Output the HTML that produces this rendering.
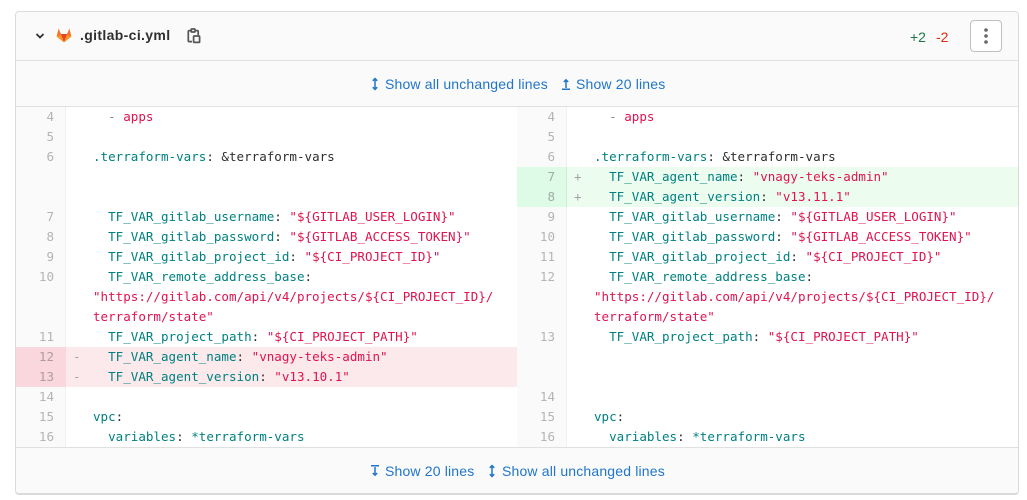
<!DOCTYPE html>
<html><head><meta charset="utf-8"><style>
html,body{margin:0;padding:0;background:#fff;width:1027px;height:500px;overflow:hidden}
body{position:relative;font-family:"Liberation Sans",sans-serif}
.a{position:absolute}
#card{left:15px;top:11px;width:1002px;height:481px;border:1px solid #dbdbdb;border-bottom:2px solid #dbdbdb;border-radius:4px;background:#fafafa}
.bar{position:absolute;left:16px;width:1002px;background:#fafafa;box-sizing:border-box}
.l{position:absolute;top:0;font-size:14px;line-height:20px;color:#1f75cb;white-space:nowrap;letter-spacing:.17px}
.col{position:absolute;top:107px;height:340px;background:#fff;font:12.55px/20px "DejaVu Sans Mono",monospace;overflow:hidden}
.r{height:20px;position:relative;background:#fff}
.n{position:absolute;left:0;top:0;width:50px;height:20px;box-sizing:border-box;background:#fafafa;border-right:1px solid #f0f0f0;text-align:right;padding-right:11px;color:#b4b4b4}
.c{position:absolute;left:77px;top:0;color:#2e2e2e;white-space:pre}
.m{position:absolute;left:57px;top:0;color:#a3a3a3}
.k{color:#008080}.s{color:#e0134f}.g{color:#8a8a8a}
.del{background:#fbe9eb}.del .n{background:#f9d7dc;border-color:#f9d7dc;color:#b09ca0}
.add{background:#ecfdf0}.add .n{background:#ddfbe6;border-color:#c7f0d2;color:#a0ada4}
</style></head><body>
<div class="a" id="card"></div>

<svg class="a" style="left:35px;top:32px" width="10" height="8" viewBox="0 0 10 8"><path d="M1.500 2l3.500 3.500L8.500 2" fill="none" stroke="#303030" stroke-width="1.800"/></svg>
<svg class="a" style="left:56px;top:27px" width="16" height="16" viewBox="0 0 16 16"><path d="M8 15.200L.6 9.600 2.600 1.600 5 7h6l2.400-5.400 2 8z" fill="#fc6d26"/><path d="M8 15.200L5 7h6z" fill="#e24329"/><path d="M8 15.200L.6 9.600 5 7z" fill="#fca326" opacity=".75"/><path d="M8 15.200l7.400-5.600L11 7z" fill="#fca326" opacity=".75"/></svg>
<div class="a" style="left:80px;top:25px;font-size:14px;line-height:20px;font-weight:700;color:#303030;letter-spacing:.35px">.gitlab-ci.yml</div>
<svg class="a" style="left:187px;top:28px" width="14" height="16" viewBox="0 0 14 16" fill="none" stroke="#555" stroke-width="1.700"><path d="M4 2.600H2.200a.9.9 0 0 0-.9.9v9.200a.9.9 0 0 0 .9.9H5M8.800 2.600h1.500a.9.9 0 0 1 .9.9V7"/><rect x="4.200" y="1" width="3.800" height="3" rx=".6"/><rect x="6.600" y="8" width="6" height="6.400" rx=".8"/></svg>

<div class="a" style="left:910px;top:27px;font-size:14px;line-height:20px;color:#217645">+2</div>
<div class="a" style="left:936px;top:27px;font-size:14px;line-height:20px;color:#dd2b0e">-2</div>
<div class="a" style="left:970px;top:20px;width:32px;height:32px;box-sizing:border-box;border:1px solid #bfbfbf;border-radius:4px;background:#fff"></div>
<svg class="a" style="left:981px;top:27px" width="10" height="18" viewBox="0 0 10 18" fill="#666"><circle cx="5" cy="3" r="1.800"/><circle cx="5" cy="9" r="1.800"/><circle cx="5" cy="15" r="1.800"/></svg>

<div class="bar" style="top:60px;height:47px;border-top:1px solid #e0e0e0;border-bottom:1px solid #e0e0e0"></div>
<svg class="a" style="left:370px;top:77px" width="10" height="14" viewBox="0 0 10 14" fill="none" stroke="#1f75cb" stroke-width="1.500"><path d="M5 2v10M2.800 3.800L5 1.600l2.200 2.200M2.800 10.200L5 12.400l2.200-2.200"/></svg>
<div class="a l" style="left:385px;top:74px">Show all unchanged lines</div>
<svg class="a" style="left:561px;top:77px" width="10" height="14" viewBox="0 0 10 14" fill="none" stroke="#1f75cb" stroke-width="1.500"><path d="M5 3v8M2.800 5L5 2.800 7.200 5M1 12.200h8"/></svg>
<div class="a l" style="left:576px;top:74px">Show 20 lines</div>

<div class="col" style="left:16px;width:501px">
<div class="r"><span class="n">4</span><span class="c"><span class="g">  -</span> <span class="s">apps</span></span></div>
<div class="r"><span class="n">5</span></div>
<div class="r"><span class="n">6</span><span class="c"><span class="k">.terraform-vars</span>: &amp;terraform-vars</span></div>
<div class="r"><span class="n"></span></div>
<div class="r"><span class="n"></span></div>
<div class="r"><span class="n">7</span><span class="c">  <span class="k">TF_VAR_gitlab_username</span>: <span class="s">"${GITLAB_USER_LOGIN}"</span></span></div>
<div class="r"><span class="n">8</span><span class="c">  <span class="k">TF_VAR_gitlab_password</span>: <span class="s">"${GITLAB_ACCESS_TOKEN}"</span></span></div>
<div class="r"><span class="n">9</span><span class="c">  <span class="k">TF_VAR_gitlab_project_id</span>: <span class="s">"${CI_PROJECT_ID}"</span></span></div>
<div class="r"><span class="n">10</span><span class="c">  <span class="k">TF_VAR_remote_address_base</span>:</span></div>
<div class="r"><span class="n"></span><span class="c s">"https://gitlab.com/api/v4/projects/${CI_PROJECT_ID}/</span></div>
<div class="r"><span class="n"></span><span class="c s">terraform/state"</span></div>
<div class="r"><span class="n">11</span><span class="c">  <span class="k">TF_VAR_project_path</span>: <span class="s">"${CI_PROJECT_PATH}"</span></span></div>
<div class="r del"><span class="n">12</span><span class="m">-</span><span class="c">  <span class="k">TF_VAR_agent_name</span>: <span class="s">"vnagy-teks-admin"</span></span></div>
<div class="r del"><span class="n">13</span><span class="m">-</span><span class="c">  <span class="k">TF_VAR_agent_version</span>: <span class="s">"v13.10.1"</span></span></div>
<div class="r"><span class="n">14</span></div>
<div class="r"><span class="n">15</span><span class="c"><span class="k">vpc</span>:</span></div>
<div class="r"><span class="n">16</span><span class="c">  <span class="k">variables</span>: <span class="k">*terraform-vars</span></span></div>
</div>

<div class="col" style="left:517px;width:501px">
<div class="r"><span class="n">4</span><span class="c"><span class="g">  -</span> <span class="s">apps</span></span></div>
<div class="r"><span class="n">5</span></div>
<div class="r"><span class="n">6</span><span class="c"><span class="k">.terraform-vars</span>: &amp;terraform-vars</span></div>
<div class="r add"><span class="n">7</span><span class="m">+</span><span class="c">  <span class="k">TF_VAR_agent_name</span>: <span class="s">"vnagy-teks-admin"</span></span></div>
<div class="r add"><span class="n">8</span><span class="m">+</span><span class="c">  <span class="k">TF_VAR_agent_version</span>: <span class="s">"v13.11.1"</span></span></div>
<div class="r"><span class="n">9</span><span class="c">  <span class="k">TF_VAR_gitlab_username</span>: <span class="s">"${GITLAB_USER_LOGIN}"</span></span></div>
<div class="r"><span class="n">10</span><span class="c">  <span class="k">TF_VAR_gitlab_password</span>: <span class="s">"${GITLAB_ACCESS_TOKEN}"</span></span></div>
<div class="r"><span class="n">11</span><span class="c">  <span class="k">TF_VAR_gitlab_project_id</span>: <span class="s">"${CI_PROJECT_ID}"</span></span></div>
<div class="r"><span class="n">12</span><span class="c">  <span class="k">TF_VAR_remote_address_base</span>:</span></div>
<div class="r"><span class="n"></span><span class="c s">"https://gitlab.com/api/v4/projects/${CI_PROJECT_ID}/</span></div>
<div class="r"><span class="n"></span><span class="c s">terraform/state"</span></div>
<div class="r"><span class="n">13</span><span class="c">  <span class="k">TF_VAR_project_path</span>: <span class="s">"${CI_PROJECT_PATH}"</span></span></div>
<div class="r"><span class="n"></span></div>
<div class="r"><span class="n"></span></div>
<div class="r"><span class="n">14</span></div>
<div class="r"><span class="n">15</span><span class="c"><span class="k">vpc</span>:</span></div>
<div class="r"><span class="n">16</span><span class="c">  <span class="k">variables</span>: <span class="k">*terraform-vars</span></span></div>
</div>

<div class="bar" style="top:447px;height:45px;border-top:1px solid #e0e0e0"></div>
<svg class="a" style="left:370px;top:464px" width="10" height="14" viewBox="0 0 10 14" fill="none" stroke="#1f75cb" stroke-width="1.500"><path d="M5 3v8M2.800 9L5 11.200 7.200 9M1 1.800h8"/></svg>
<div class="a l" style="left:385px;top:461px">Show 20 lines</div>
<svg class="a" style="left:487px;top:464px" width="10" height="14" viewBox="0 0 10 14" fill="none" stroke="#1f75cb" stroke-width="1.500"><path d="M5 2v10M2.800 3.800L5 1.600l2.200 2.200M2.800 10.200L5 12.400l2.200-2.200"/></svg>
<div class="a l" style="left:502px;top:461px">Show all unchanged lines</div>
</body></html>
